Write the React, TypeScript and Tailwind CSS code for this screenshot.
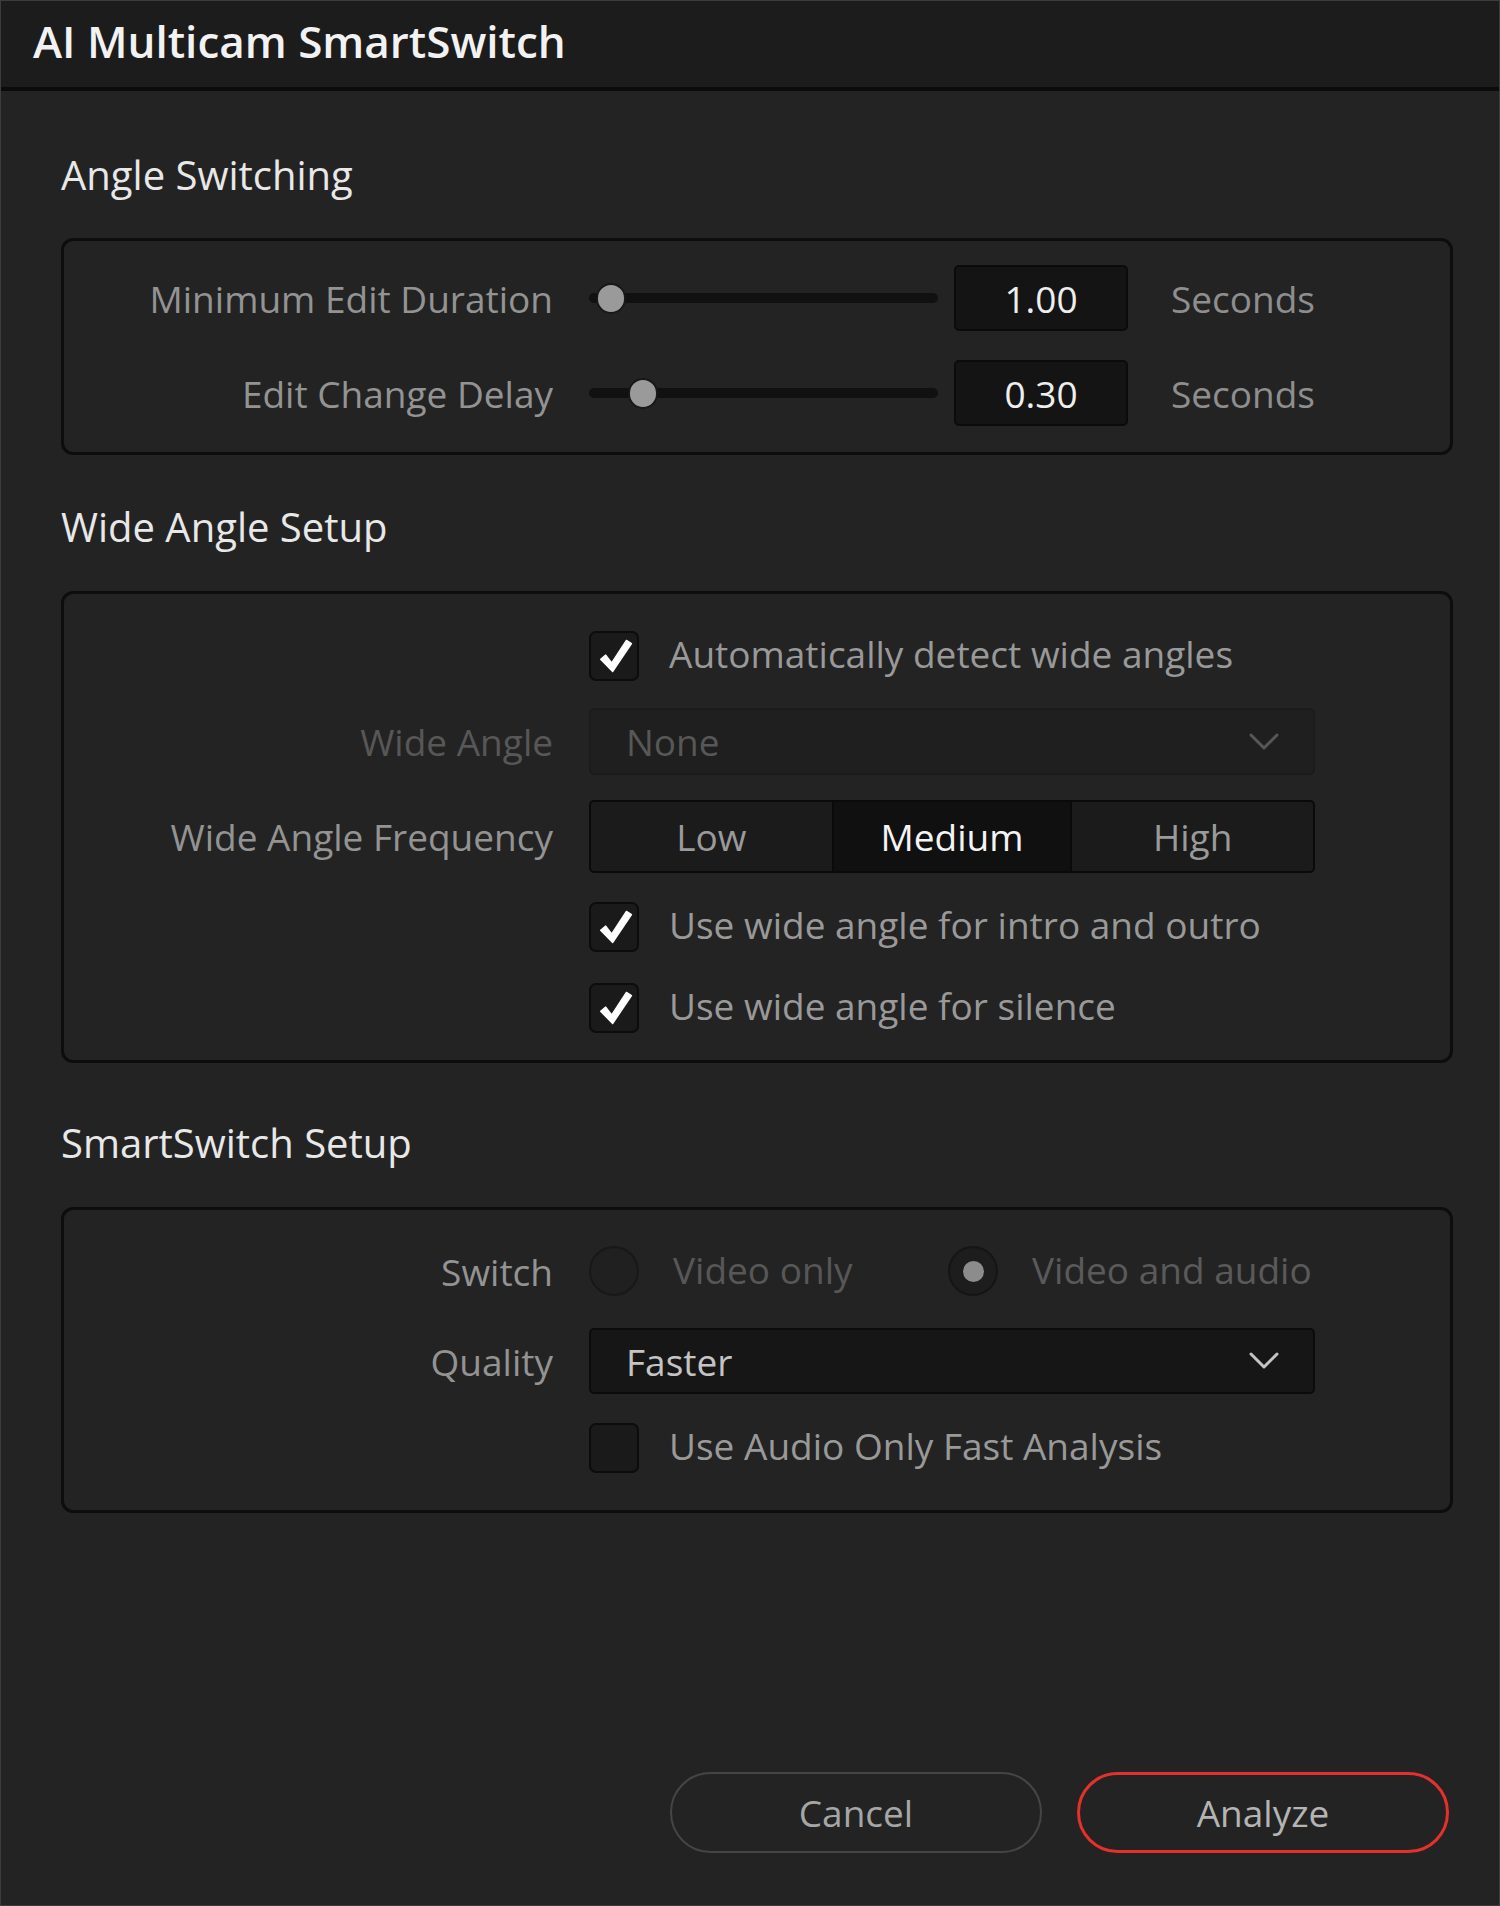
import type { ReactNode } from 'react'

function CheckMark() {
  return (
    <svg viewBox="0 0 50 50" className="h-[46px] w-[46px]">
      <path
        d="M10.5 28.5 L16 24 L22.5 32.5 L38.5 8 L44 11.5 L23.5 42 Z"
        fill="#ffffff"
        stroke="#ffffff"
        strokeWidth="1.5"
        strokeLinejoin="round"
      />
    </svg>
  )
}

function Chevron({ color }: { color: string }) {
  return (
    <svg viewBox="0 0 30 18" className="h-[18px] w-[30px]">
      <path d="M2 2 L15 15 L28 2" fill="none" stroke={color} strokeWidth="3" strokeLinecap="round" strokeLinejoin="round" />
    </svg>
  )
}

function Checkbox({ checked }: { checked: boolean }) {
  return (
    <div className="flex h-[50px] w-[50px] shrink-0 items-center justify-center rounded-[7px] border-2 border-[#0c0c0c] bg-[#1a1a1a]">
      {checked && <CheckMark />}
    </div>
  )
}

function Row({ label, dim, children }: { label?: string; dim?: boolean; children: ReactNode }) {
  return (
    <div className="flex items-center">
      <div
        className={
          dim
            ? 'w-[489px] shrink-0 text-right text-[37px] leading-none text-[#575757]'
            : 'w-[489px] shrink-0 text-right text-[37px] leading-none text-[#939393]'
        }
      >
        {label}
      </div>
      <div className="ml-[36px] flex items-center">{children}</div>
    </div>
  )
}

function Slider({ thumb }: { thumb: number }) {
  return (
    <div className="relative h-[30px] w-[349px]">
      <div className="absolute left-0 right-0 top-[10px] h-[10px] rounded-full bg-[#111111]" />
      <div
        className="absolute top-0 h-[31px] w-[30px] rounded-full border-2 border-[#181818] bg-[#9a9a9a]"
        style={{ left: thumb }}
      />
    </div>
  )
}

function NumberBox({ value }: { value: string }) {
  return (
    <div className="flex h-[66px] w-[174px] items-center justify-center rounded-[5px] border-2 border-[#0b0b0b] bg-[#141414] text-[37px] leading-none text-[#eeeeee]">
      {value}
    </div>
  )
}

function CheckRow({ checked, text }: { checked: boolean; text: string }) {
  return (
    <Row>
      <Checkbox checked={checked} />
      <span className="ml-[30px] pb-[6px] text-[37px] leading-none text-[#999999]">{text}</span>
    </Row>
  )
}

function Heading({ children, className }: { children: ReactNode; className: string }) {
  return <h2 className={'text-[40px] leading-none text-[#e8e8e8] ' + className}>{children}</h2>
}

export default function App() {
  return (
    <div className="flex h-[1906px] w-[1500px] flex-col border border-[#3c3c3c] bg-[#232323] font-['Open_Sans',sans-serif]">
      <div className="h-[90px] shrink-0 border-b-4 border-[#0b0b0b] bg-[#1c1c1c] pl-[32px] pt-[18px]">
        <h1 className="text-[44px] font-semibold leading-none text-[#f2f2f2]">AI Multicam SmartSwitch</h1>
      </div>

      <div className="flex flex-1 flex-col pl-[60px] pr-[46px]">
        <Heading className="mb-[43px] mt-[64px]">Angle Switching</Heading>
        <div className="flex flex-col gap-[29px] rounded-[12px] border-[3px] border-[#0d0d0d] pb-[26px] pt-[24px]">
          <Row label="Minimum Edit Duration">
            <Slider thumb={7} />
            <div className="ml-[16px]">
              <NumberBox value="1.00" />
            </div>
            <span className="ml-[43px] text-[37px] leading-none text-[#8e8e8e]">Seconds</span>
          </Row>
          <Row label="Edit Change Delay">
            <Slider thumb={39} />
            <div className="ml-[16px]">
              <NumberBox value="0.30" />
            </div>
            <span className="ml-[43px] text-[37px] leading-none text-[#8e8e8e]">Seconds</span>
          </Row>
        </div>

        <Heading className="mb-[44px] mt-[52px]">Wide Angle Setup</Heading>
        <div className="flex flex-col rounded-[12px] border-[3px] border-[#0d0d0d] pb-[27px] pt-[37px]">
          <CheckRow checked text="Automatically detect wide angles" />
          <div className="mt-[27px]">
            <Row label="Wide Angle" dim>
              <div className="flex h-[67px] w-[726px] items-center justify-between rounded-[5px] border-2 border-[#1b1b1b] bg-[#1f1f1f] pl-[35px] pr-[34px]">
                <span className="text-[37px] leading-none text-[#575757]">None</span>
                <Chevron color="#575757" />
              </div>
            </Row>
          </div>
          <div className="mt-[25px]">
            <Row label="Wide Angle Frequency">
              <div className="grid h-[73px] w-[726px] grid-cols-3 overflow-hidden rounded-[5px] border-2 border-[#0a0a0a] bg-[#0a0a0a] text-[37px] leading-none">
                <div className="flex items-center justify-center bg-[#1b1b1b] text-[#9a9a9a]">Low</div>
                <div className="flex items-center justify-center border-x-2 border-[#0a0a0a] bg-[#101010] text-[#f4f4f4]">Medium</div>
                <div className="flex items-center justify-center bg-[#1b1b1b] text-[#9a9a9a]">High</div>
              </div>
            </Row>
          </div>
          <div className="mt-[29px]">
            <CheckRow checked text="Use wide angle for intro and outro" />
          </div>
          <div className="mt-[31px]">
            <CheckRow checked text="Use wide angle for silence" />
          </div>
        </div>

        <Heading className="mb-[44px] mt-[60px]">SmartSwitch Setup</Heading>
        <div className="flex flex-col rounded-[12px] border-[3px] border-[#0d0d0d] pb-[37px] pt-[36px]">
          <Row label="Switch">
            <div className="h-[50px] w-[50px] rounded-full border-2 border-[#181818] bg-[#202020]" />
            <span className="ml-[34px] w-[275px] pb-[4px] text-[37px] leading-none text-[#575757]">Video only</span>
            <div className="flex h-[50px] w-[50px] items-center justify-center rounded-full border-2 border-[#151515] bg-[#1d1d1d]">
              <div className="h-[21px] w-[21px] rounded-full bg-[#8c8c8c]" />
            </div>
            <span className="ml-[34px] pb-[4px] text-[37px] leading-none text-[#5a5a5a]">Video and audio</span>
          </Row>
          <div className="mt-[32px]">
            <Row label="Quality">
              <div className="flex h-[66px] w-[726px] items-center justify-between rounded-[5px] border-2 border-[#0b0b0b] bg-[#161616] pl-[35px] pr-[34px]">
                <span className="text-[37px] leading-none text-[#c4c4c4]">Faster</span>
                <Chevron color="#c4c4c4" />
              </div>
            </Row>
          </div>
          <div className="mt-[29px]">
            <CheckRow checked={false} text="Use Audio Only Fast Analysis" />
          </div>
        </div>

        <div className="mt-auto flex justify-end gap-[35px] pb-[52px] pr-[4px]">
          <button
            type="button"
            className="flex h-[81px] w-[372px] items-center justify-center rounded-full border-2 border-[#454545] text-[37px] leading-none text-[#a6a6a6]"
          >
            Cancel
          </button>
          <button
            type="button"
            className="flex h-[81px] w-[372px] items-center justify-center rounded-full border-[3px] border-[#e5302b] text-[37px] leading-none text-[#b4b4b4]"
          >
            Analyze
          </button>
        </div>
      </div>
    </div>
  )
}
